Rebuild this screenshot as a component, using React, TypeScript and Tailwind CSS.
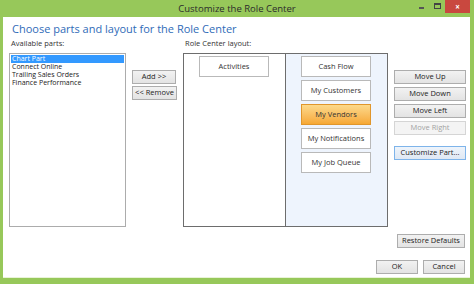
import React from "react";

const font = { fontFamily: '"Open Sans", "Noto Sans", Arial, sans-serif' };

function Btn({ children, w, disabled, focus }: { children: React.ReactNode; w: string; disabled?: boolean; focus?: boolean }) {
  const base = "h-[14px] flex items-center justify-center text-[7.5px] leading-none border";
  const cls = disabled
    ? "bg-[#f4f4f4] border-[#d5d5d5] text-[#a3a3a3]"
    : focus
    ? "bg-gradient-to-b from-[#eef4fb] to-[#dfe8f3] border-[#7eb4ea] text-[#222]"
    : "bg-gradient-to-b from-[#f2f2f2] to-[#e3e3e3] border-[#adadad] text-[#222]";
  return <div className={`${base} ${cls} ${w}`}>{children}</div>;
}

function Part({ children, active }: { children: React.ReactNode; active?: boolean }) {
  return (
    <div
      className={`w-[70px] h-[21px] flex items-center justify-center text-[7.5px] leading-none border ${
        active
          ? "bg-gradient-to-b from-[#fcd98a] to-[#f6a833] border-[#e0962c] text-[#333]"
          : "bg-white border-[#b9b9b9] text-[#333]"
      }`}
    >
      {children}
    </div>
  );
}

export default function App() {
  return (
    <div className="w-[474px] h-[284px] bg-[#97c85a] flex flex-col overflow-hidden" style={font}>
      <div className="h-[17px] relative flex items-center justify-center">
        <span className="text-[9.5px] text-[#2b2b2b] leading-none">Customize the Role Center</span>
        <div className="absolute right-[4px] top-0 flex items-start">
          <div className="w-[16px] h-[12px] flex items-center justify-center">
            <div className="w-[5px] h-[2px] bg-[#555] mt-[3px]" />
          </div>
          <div className="w-[16px] h-[12px] flex items-center justify-center">
            <div className="w-[7px] h-[6px] border border-[#444] border-t-2" />
          </div>
          <div className="w-[25px] h-[13px] bg-[#c9483f] flex items-center justify-center text-white text-[8px] leading-none font-bold">
            ×
          </div>
        </div>
      </div>
      <div className="flex-1 mx-[4px] mb-[6px] ml-[3px] bg-white flex flex-col border-b border-[#e9f3d8]">
        <div className="pl-[9px] pt-[6px] h-[23px] text-[11px] leading-none text-[#2f6bb8]">
          Choose parts and layout for the Role Center
        </div>
        <div className="flex text-[7.5px] leading-none text-[#333] h-[13px]">
          <div className="pl-[8px] w-[182px]">Available parts:</div>
          <div>Role Center layout:</div>
        </div>
        <div className="flex h-[174px]">
          <div className="ml-[6px] w-[117px] border border-[#acacac] p-[1px] text-[7px] leading-[8px] text-[#222]">
            <div className="bg-[#3399ff] text-white pl-[1px] h-[8px]">Chart Part</div>
            <div className="pl-[1px] h-[8px]">Connect Online</div>
            <div className="pl-[1px] h-[8px]">Trailing Sales Orders</div>
            <div className="pl-[1px] h-[8px]">Finance Performance</div>
          </div>
          <div className="ml-[6px] pt-[17px] flex flex-col gap-[2px]">
            <Btn w="w-[44px]">Add &gt;&gt;</Btn>
            <Btn w="w-[45px]">&lt;&lt; Remove</Btn>
          </div>
          <div className="ml-[6px] w-[205px] border border-[#6d6d6d] flex">
            <div className="w-[102px] border-r border-[#6d6d6d] pt-[2px] pl-[15px]">
              <Part>Activities</Part>
            </div>
            <div className="flex-1 bg-[#eef4fd] pt-[2px] pl-[15px] flex flex-col gap-[3px]">
              <Part>Cash Flow</Part>
              <Part>My Customers</Part>
              <Part active>My Vendors</Part>
              <Part>My Notifications</Part>
              <Part>My Job Queue</Part>
            </div>
          </div>
          <div className="ml-[6px] pt-[17px] flex flex-col gap-[3px]">
            <Btn w="w-[72px]">Move Up</Btn>
            <Btn w="w-[72px]">Move Down</Btn>
            <Btn w="w-[72px]">Move Left</Btn>
            <Btn w="w-[72px]" disabled>Move Right</Btn>
            <div className="h-[5px]" />
            <Btn w="w-[72px]" focus>Customize Part...</Btn>
          </div>
        </div>
        <div className="flex justify-end pr-[5px] mt-[7px]">
          <Btn w="w-[68px]">Restore Defaults</Btn>
        </div>
        <div className="flex justify-end pr-[5px] mt-[12px] gap-[5px]">
          <Btn w="w-[42px]">OK</Btn>
          <Btn w="w-[42px]">Cancel</Btn>
        </div>
      </div>
    </div>
  );
}
